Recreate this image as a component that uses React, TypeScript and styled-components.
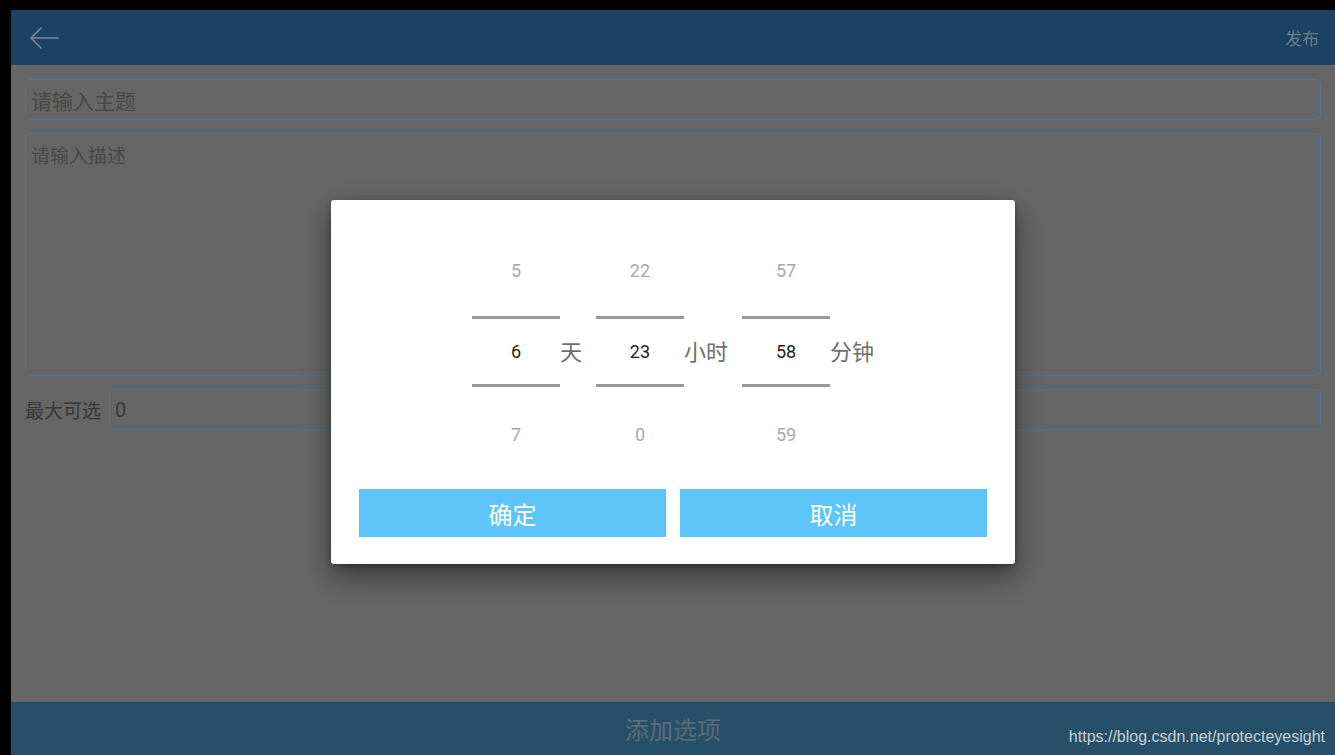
import React from "react";
import styled, { createGlobalStyle } from "styled-components";

const Global = createGlobalStyle`
  html, body { margin: 0; padding: 0; background: #000; }
  * { box-sizing: border-box; }
`;

const FONT = `Roboto, "Noto Sans CJK SC", sans-serif`;

const Frame = styled.div`
  width: 1335px;
  height: 755px;
  background: #000;
  padding: 10px 0 0 11px;
  display: flex;
  overflow: hidden;
  font-family: ${FONT};
`;

const Screen = styled.div`
  position: relative;
  flex: 1;
  display: flex;
  flex-direction: column;
  background: #666666;
`;

const Header = styled.header`
  height: 55px;
  flex: none;
  background: #1a4262;
  display: flex;
  align-items: center;
  justify-content: space-between;
  padding: 0 16px 0 18px;
`;

const BackButton = styled.div`
  display: flex;
  align-items: center;
  width: 30px;
  height: 24px;
`;

const Publish = styled.span`
  font-size: 17px;
  color: #6f7d88;
`;

const Content = styled.main`
  flex: 1;
  display: flex;
  flex-direction: column;
  gap: 13px;
  padding: 14px 14px;
`;

const Field = styled.div<{ $h: number; $size: number; $top?: boolean; $grow?: boolean }>`
  height: ${(p) => p.$h}px;
  flex: ${(p) => (p.$grow ? "1 1 auto" : "0 0 auto")};
  align-self: stretch;
  border: 1px solid #4d7495;
  border-radius: 5px;
  display: flex;
  align-items: ${(p) => (p.$top ? "flex-start" : "center")};
  padding: ${(p) => (p.$top ? "7px 5px" : "0 5px")};
  font-size: ${(p) => p.$size}px;
  color: #484848;
`;

const Row = styled.div`
  display: flex;
  align-items: center;
  gap: 8px;
`;

const RowLabel = styled.span`
  font-size: 19px;
  color: #383838;
`;

const Value = styled.span`
  color: #3a3a3a;
`;

const BottomBar = styled.footer`
  position: relative;
  height: 53px;
  flex: none;
  background: #26506a;
  display: flex;
  align-items: center;
  justify-content: center;
  font-size: 24px;
  color: #5c6d78;
`;

const Watermark = styled.span`
  position: absolute;
  right: 10px;
  bottom: 9px;
  font-family: "Liberation Sans", Arial, sans-serif;
  font-size: 16px;
  color: #c6d0d8;
`;

const Overlay = styled.div`
  position: absolute;
  inset: 0;
  display: flex;
  align-items: center;
  justify-content: center;
`;

const Dialog = styled.div`
  width: 684px;
  height: 364px;
  margin-top: -1px;
  background: #fff;
  border-radius: 3px;
  box-shadow: 0 12px 28px rgba(0, 0, 0, 0.45), 0 2px 6px rgba(0, 0, 0, 0.3);
  padding: 24px 28px 27px;
  display: flex;
  flex-direction: column;
  gap: 8px;
`;

const Pickers = styled.div`
  display: flex;
  justify-content: center;
  gap: 14px;
`;

const Unit = styled.div`
  display: flex;
  align-items: center;
`;

const Column = styled.div`
  width: 88px;
  display: flex;
  flex-direction: column;
`;

const Cell = styled.div<{ $h: number }>`
  height: ${(p) => p.$h}px;
  display: flex;
  align-items: center;
  justify-content: center;
  font-size: 18px;
  color: #a8a8a8;
`;

const Selected = styled.div`
  height: 71px;
  border-top: 3px solid #999;
  border-bottom: 3px solid #999;
  display: flex;
  align-items: center;
  justify-content: center;
  font-size: 18px;
  color: #1e1e1e;
`;

const UnitLabel = styled.span`
  font-size: 22px;
  color: #6e6e6e;
  transform: translateY(-3px);
`;

const Buttons = styled.div`
  display: flex;
  gap: 14px;
`;

const ActionButton = styled.button`
  flex: 1;
  height: 48px;
  border: none;
  border-radius: 0;
  background: #5ec5fb;
  color: #fff;
  font-family: ${FONT};
  font-size: 24px;
  padding: 0;
  cursor: pointer;
`;

const pickers = [
  { prev: "5", cur: "6", next: "7", label: "天" },
  { prev: "22", cur: "23", next: "0", label: "小时" },
  { prev: "57", cur: "58", next: "59", label: "分钟" },
];

export default function App() {
  return (
    <>
      <Global />
      <Frame>
        <Screen>
          <Header>
            <BackButton>
              <svg width="30" height="24" viewBox="0 0 30 24" fill="none">
                <path
                  d="M29 12H2M12 2L2 12L12 22"
                  stroke="#7f8b96"
                  strokeWidth="1.6"
                  strokeLinecap="round"
                  strokeLinejoin="round"
                />
              </svg>
            </BackButton>
            <Publish>发布</Publish>
          </Header>
          <Content>
            <Field $h={41} $size={21}>
              请输入主题
            </Field>
            <Field $h={243} $size={19} $top>
              请输入描述
            </Field>
            <Row>
              <RowLabel>最大可选</RowLabel>
              <Field $h={41} $size={20} $grow>
                <Value>0</Value>
              </Field>
            </Row>
          </Content>
          <BottomBar>
            添加选项
            <Watermark>https://blog.csdn.net/protecteyesight</Watermark>
          </BottomBar>
          <Overlay>
            <Dialog>
              <Pickers>
                {pickers.map((p) => (
                  <Unit key={p.label}>
                    <Column>
                      <Cell $h={92}>{p.prev}</Cell>
                      <Selected>{p.cur}</Selected>
                      <Cell $h={94}>{p.next}</Cell>
                    </Column>
                    <UnitLabel>{p.label}</UnitLabel>
                  </Unit>
                ))}
              </Pickers>
              <Buttons>
                <ActionButton>确定</ActionButton>
                <ActionButton>取消</ActionButton>
              </Buttons>
            </Dialog>
          </Overlay>
        </Screen>
      </Frame>
    </>
  );
}
